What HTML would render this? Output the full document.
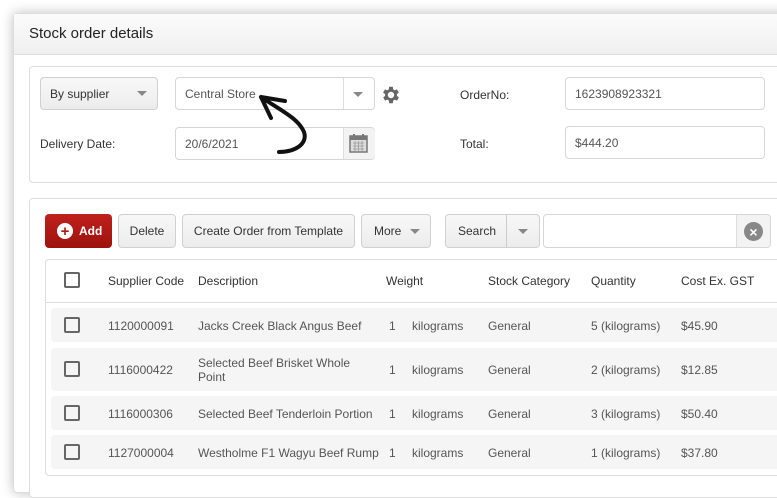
<!DOCTYPE html>
<html><head><style>
*{box-sizing:border-box;margin:0;padding:0}
body{width:777px;height:482px;background:#fff;font-family:"Liberation Sans",Arial,sans-serif;font-size:12px;color:#333;position:relative;overflow:hidden}
.abs{position:absolute}
.card{left:13px;top:13px;width:780px;height:480px;background:#fff;border:1px solid #ddd;border-radius:4px;box-shadow:0 0 12px rgba(0,0,0,.25)}
.hdr{left:14px;top:14px;width:770px;height:41px;background:linear-gradient(#fbfbfb,#f0f0f0);border-bottom:1px solid #ddd}
.panel{border:1px solid #ddd;border-radius:4px;background:#fff}
.inp{border:1px solid #d6d6d6;border-radius:4px;background:#fff;display:flex;align-items:center;padding-left:9px;color:#555}
.btn{border:1px solid #d0d0d0;border-radius:4px;background:linear-gradient(#f8f8f8,#ececec);display:flex;align-items:center;justify-content:center;color:#333}
.tri{width:0;height:0;border-left:5px solid transparent;border-right:5px solid transparent;border-top:5px solid #888}
.cb{width:16px;height:16px;border:2px solid #666;border-radius:2px}
.row{left:51px;width:730px;background:#f5f5f5;border-radius:4px}
.t{position:absolute;white-space:nowrap}
</style></head><body>
<div class="abs card"></div>
<div class="abs hdr"></div>
<div class="t" style="left:29px;top:25px;font-size:15px;color:#222">Stock order details</div>

<div class="abs panel" style="left:29px;top:66px;width:760px;height:117px"></div>
<div class="abs btn" style="left:40px;top:77px;width:118px;height:33px;justify-content:space-between;padding:0 10px 0 9px"><span>By supplier</span><span class="tri"></span></div>
<div class="abs inp" style="left:175px;top:77px;width:200px;height:33px">Central Store</div>
<div class="abs" style="left:343px;top:78px;width:1px;height:31px;background:#ddd"></div>
<div class="abs tri" style="left:353px;top:92px"></div>
<svg class="abs" style="left:380px;top:84px" width="22" height="22" viewBox="0 0 24 24"><path fill="#666" d="M19.4 13a7.5 7.5 0 000-2l2.1-1.6-2-3.5-2.5 1a7 7 0 00-1.700-1L15 3h-4l-.4 2.9a7 7 0 00-1.7 1l-2.5-1-2 3.5L6.6 11a7.5 7.5 0 000 2l-2.1 1.6 2 3.5 2.5-1a7 7 0 001.7 1L11 21h4l.4-2.9a7 7 0 001.7-1l2.5 1 2-3.5zM13 15.5a3.5 3.5 0 110-7 3.5 3.5 0 010 7z" transform="translate(-1 0)"/></svg>
<div class="t" style="left:40px;top:137px">Delivery Date:</div>
<div class="abs inp" style="left:175px;top:127px;width:200px;height:33px">20/6/2021</div>
<div class="abs" style="left:343px;top:128px;width:32px;height:31px;background:#f3f3f3;border-left:1px solid #ddd;border-radius:0 4px 4px 0"></div>
<svg class="abs" style="left:349px;top:133px" width="19" height="20" viewBox="0 0 19 20"><rect x="1" y="3" width="17" height="16" fill="#ddd" stroke="#777" stroke-width="1.5"/><rect x="1" y="3" width="17" height="4" fill="#777"/><path d="M5 1v4M14 1v4" stroke="#777" stroke-width="2"/><path d="M4 10h11M4 13h11M4 16h11M6 8v10M9.5 8v10M13 8v10" stroke="#999" stroke-width=".8"/></svg>
<svg class="abs" style="left:0;top:0" width="777" height="482"><path d="M261 97 L285 101 M261 97 L271 118 M261 97 C280 110 298 118 304 132 C308 144 295 152 279 152" fill="none" stroke="#111" stroke-width="4" stroke-linecap="round" stroke-linejoin="round"/></svg>
<div class="t" style="left:460px;top:88px">OrderNo:</div>
<div class="abs inp" style="left:565px;top:77px;width:200px;height:33px">1623908923321</div>
<div class="t" style="left:460px;top:137px">Total:</div>
<div class="abs inp" style="left:565px;top:126px;width:200px;height:33px">$444.20</div>

<div class="abs panel" style="left:29px;top:198px;width:760px;height:300px"></div>
<div class="abs" style="left:45px;top:214px;width:67px;height:34px;border-radius:4px;background:linear-gradient(#c0211b,#9e120e);color:#fff;font-weight:bold;display:flex;align-items:center;padding-left:12px"><span style="width:16px;height:16px;border-radius:50%;background:#fff;color:#b01a15;display:inline-flex;align-items:center;justify-content:center;font-size:15px;margin-right:6px;line-height:1">+</span>Add</div>
<div class="abs btn" style="left:118px;top:214px;width:58px;height:34px">Delete</div>
<div class="abs btn" style="left:182px;top:214px;width:173px;height:34px">Create Order from Template</div>
<div class="abs btn" style="left:361px;top:214px;width:70px;height:34px;justify-content:space-between;padding:0 10px 0 12px"><span>More</span><span class="tri"></span></div>
<div class="abs btn" style="left:445px;top:214px;width:95px;height:34px;justify-content:flex-start;padding-left:12px">Search</div>
<div class="abs" style="left:506px;top:215px;width:1px;height:32px;background:#ccc"></div>
<div class="abs tri" style="left:518px;top:229px"></div>
<div class="abs inp" style="left:543px;top:214px;width:228px;height:34px"></div>
<div class="abs" style="left:736px;top:215px;width:34px;height:32px;background:#f3f3f3;border-left:1px solid #ddd;border-radius:0 4px 4px 0"></div>
<div class="abs" style="left:744px;top:222px;width:19px;height:19px;border-radius:50%;background:#888;color:#fff;font-weight:bold;font-size:14px;display:flex;align-items:center;justify-content:center">×</div>

<div class="abs panel" style="left:45px;top:259px;width:750px;height:217px"></div>
<div class="abs" style="left:46px;top:302px;width:740px;height:1px;background:#ddd"></div>
<div class="abs cb" style="left:64px;top:272px"></div>
<div class="t" style="left:108px;top:274px">Supplier Code</div>
<div class="t" style="left:198px;top:274px">Description</div>
<div class="t" style="left:386px;top:274px">Weight</div>
<div class="t" style="left:488px;top:274px">Stock Category</div>
<div class="t" style="left:591px;top:274px">Quantity</div>
<div class="t" style="left:681px;top:274px">Cost Ex. GST</div>

<div class="abs row" style="top:308px;height:34px"></div>
<div class="abs row" style="top:348px;height:43px"></div>
<div class="abs row" style="top:396px;height:34px"></div>
<div class="abs row" style="top:435px;height:34px"></div>

<div style="color:#555">
<div class="abs cb" style="left:64px;top:317px"></div>
<div class="t" style="left:108px;top:319px">1120000091</div>
<div class="t" style="left:198px;top:319px">Jacks Creek Black Angus Beef</div>
<div class="t" style="left:389px;top:319px">1</div><div class="t" style="left:412px;top:319px">kilograms</div>
<div class="t" style="left:488px;top:319px">General</div><div class="t" style="left:591px;top:319px">5 (kilograms)</div><div class="t" style="left:681px;top:319px">$45.90</div>

<div class="abs cb" style="left:64px;top:361px"></div>
<div class="t" style="left:108px;top:363px">1116000422</div>
<div class="t" style="left:198px;top:356px;line-height:14px">Selected Beef Brisket Whole<br>Point</div>
<div class="t" style="left:389px;top:363px">1</div><div class="t" style="left:412px;top:363px">kilograms</div>
<div class="t" style="left:488px;top:363px">General</div><div class="t" style="left:591px;top:363px">2 (kilograms)</div><div class="t" style="left:681px;top:363px">$12.85</div>

<div class="abs cb" style="left:64px;top:405px"></div>
<div class="t" style="left:108px;top:407px">1116000306</div>
<div class="t" style="left:198px;top:407px">Selected Beef Tenderloin Portion</div>
<div class="t" style="left:389px;top:407px">1</div><div class="t" style="left:412px;top:407px">kilograms</div>
<div class="t" style="left:488px;top:407px">General</div><div class="t" style="left:591px;top:407px">3 (kilograms)</div><div class="t" style="left:681px;top:407px">$50.40</div>

<div class="abs cb" style="left:64px;top:444px"></div>
<div class="t" style="left:108px;top:446px">1127000004</div>
<div class="t" style="left:198px;top:446px">Westholme F1 Wagyu Beef Rump</div>
<div class="t" style="left:389px;top:446px">1</div><div class="t" style="left:412px;top:446px">kilograms</div>
<div class="t" style="left:488px;top:446px">General</div><div class="t" style="left:591px;top:446px">1 (kilograms)</div><div class="t" style="left:681px;top:446px">$37.80</div>
</div>
</body></html>
